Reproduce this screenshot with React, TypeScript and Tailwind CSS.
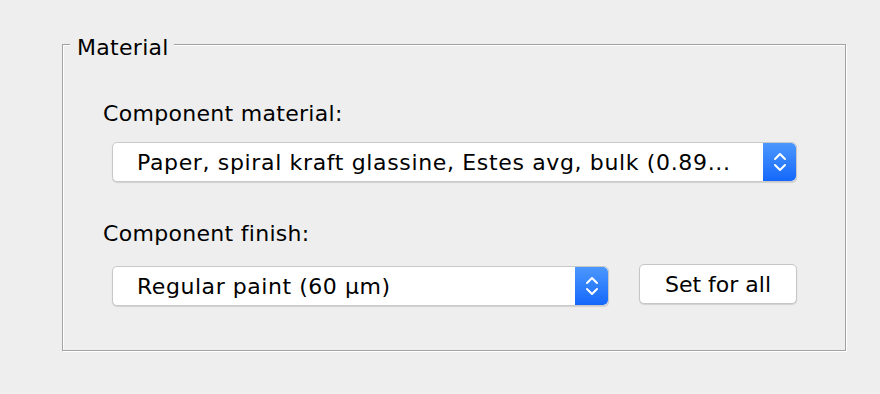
import React from "react";

const font = { fontFamily: '"DejaVu Sans", "Noto Sans", sans-serif' };

function Stepper() {
  return (
    <div className="flex h-full w-[33px] shrink-0 items-center justify-center rounded-r-[5px] bg-gradient-to-b from-[#4b97fd] to-[#1467fb]">
      <svg width="14" height="24" viewBox="0 0 14 24" fill="none">
        <path d="M2 9 L7 4 L12 9" stroke="#fff" strokeWidth="2" strokeLinecap="round" strokeLinejoin="round" />
        <path d="M2 15 L7 20 L12 15" stroke="#fff" strokeWidth="2" strokeLinecap="round" strokeLinejoin="round" />
      </svg>
    </div>
  );
}

function Combo({ value, width, tracking }: { value: string; width: string; tracking: string }) {
  return (
    <div
      className={`flex h-[40px] ${width} items-stretch rounded-[5px] border border-[#c9c9c9] bg-white shadow-[0_1px_1px_rgba(0,0,0,0.12)]`}
    >
      <div className={`flex flex-1 items-center overflow-hidden whitespace-nowrap pl-[24px] text-[22px] text-black ${tracking}`}>
        {value}
      </div>
      <Stepper />
    </div>
  );
}

export default function App() {
  return (
    <div className="h-[394px] w-[880px] bg-[#eeeeee] pl-[62px] pt-[27px]" style={font}>
      <fieldset className="h-[324px] w-[784px] border border-[#a2a2a2] pl-[40px] shadow-[1px_1px_0_#ffffff,inset_1px_1px_0_#ffffff]">
        <legend className="-ml-[33px] bg-[#eeeeee] pl-[7px] pr-[5px] pt-[8px] text-[22px] leading-[26px] text-black tracking-[0.3px]">
          Material
        </legend>
        <div className="mt-[40px] text-[22px] leading-[26px] text-black tracking-[0.3px]">Component material:</div>
        <div className="ml-[9px] mt-[15px]">
          <Combo
            value="Paper, spiral kraft glassine, Estes avg, bulk (0.89..."
            width="w-[685px]"
            tracking="tracking-[0.65px]"
          />
        </div>
        <div className="mt-[39px] text-[22px] leading-[26px] text-black tracking-[0.3px]">Component finish:</div>
        <div className="ml-[9px] mt-[19px] flex items-start gap-[30px]">
          <Combo value="Regular paint (60 µm)" width="w-[497px]" tracking="tracking-[0.55px]" />
          <button className="-mt-[2px] h-[40px] w-[158px] rounded-[5px] border border-[#c6c6c6] bg-white text-[22px] text-black shadow-[0_1px_1px_rgba(0,0,0,0.12)]">
            Set for all
          </button>
        </div>
      </fieldset>
    </div>
  );
}
